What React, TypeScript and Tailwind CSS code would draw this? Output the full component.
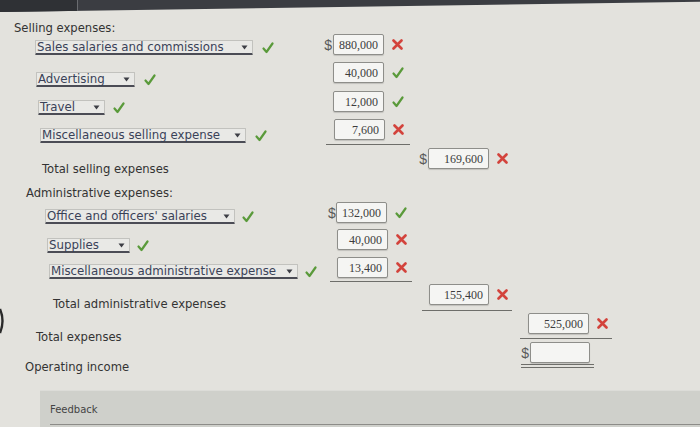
import React from 'react';

const font = "font-['DejaVu_Sans','Verdana',sans-serif]";

const Check = () => (
  <svg width="12" height="12" viewBox="0 0 12 12">
    <path d="M1.5 6.5 L4.5 10 L10.5 1.5" stroke="#5a9a3a" strokeWidth="2.2" fill="none" strokeLinecap="round" strokeLinejoin="round" />
  </svg>
);

const Cross = () => (
  <svg width="11" height="11" viewBox="0 0 11 11">
    <path d="M1.5 1.5 L9.5 9.5 M9.5 1.5 L1.5 9.5" stroke="#d3433c" strokeWidth="2.6" strokeLinecap="round" />
  </svg>
);

function Select({ label, width }: { label: string; width: string }) {
  return (
    <div className={`flex items-center h-[15px] ${width} bg-[#e9e9e6] border border-[#c2c2be] border-b-2 border-b-[#4b4c55] rounded-[1px]`}>
      <span className={`flex-1 pl-[1px] text-[11.8px] leading-[13px] text-[#3a4258] whitespace-nowrap ${font}`}>{label}</span>
      <svg width="7" height="5" viewBox="0 0 7 5" className="mr-[4px]">
        <path d="M0.5 0.5 L6.5 0.5 L3.5 4.5 Z" fill="#3d3e45" />
      </svg>
    </div>
  );
}

function Amount({ dollar, value, box, mark, lead }: { dollar?: boolean; value: string; box: string; mark?: 'ok' | 'bad'; lead: string }) {
  return (
    <div className="flex items-center">
      <span className={`${lead} text-right pr-[1px] text-[14px] leading-[14px] text-[#5a5a5a] font-['Liberation_Sans',sans-serif]`}>{dollar ? '$' : ''}</span>
      <div className={`h-[21px] ${box} bg-[#f5f5f3] border border-[#8e8e8a] rounded-[2px] shadow-[0_1px_1px_rgba(0,0,0,0.15)] flex items-center justify-end pr-[5px] text-[12px] text-[#3c3c3c] font-['Liberation_Serif',serif]`}>
        {value}
      </div>
      <span className="ml-[8px] flex items-center">{mark === 'ok' ? <Check /> : mark === 'bad' ? <Cross /> : null}</span>
    </div>
  );
}

function Label({ text, className }: { text: string; className: string }) {
  return <div className={`text-[11.6px] leading-[16px] text-[#333] whitespace-nowrap ${font} ${className}`}>{text}</div>;
}

export default function App() {
  return (
    <div className="w-[700px] h-[427px] overflow-hidden bg-[#e3e2dd] flex flex-col">
      {/* top chrome */}
      <div className="h-[12px] bg-[#3b3d42] [clip-path:polygon(0_0,100%_0,100%_15%,0_100%)] flex">
        <div className="w-[78px] bg-[#2f3135] border-r border-[#6a6c70]"></div>
      </div>

      {/* heading */}
      <div className="h-[22px] flex">
        <Label text="Selling expenses:" className="mt-[8px] ml-[14px]" />
      </div>

      {/* selling rows */}
      <div className="h-[28px] flex items-start">
        <div className="w-[322px] flex items-center gap-[9px] pl-[35px] mt-[6px]">
          <Select label="Sales salaries and commissions" width="w-[218px]" /><Check />
        </div>
        <div className="w-[96px]">
          <Amount dollar value="880,000" box="w-[51px]" mark="bad" lead="w-[11px]" />
        </div>
      </div>
      <div className="h-[29px] flex items-start">
        <div className="w-[322px] flex items-center gap-[9px] pl-[36px] mt-[10px]">
          <Select label="Advertising" width="w-[99px]" /><Check />
        </div>
        <div className="w-[96px]">
          <Amount value="40,000" box="w-[51px]" mark="ok" lead="w-[11px]" />
        </div>
      </div>
      <div className="h-[28px] flex items-start">
        <div className="w-[322px] flex items-center gap-[8px] pl-[38px] mt-[9px]">
          <Select label="Travel" width="w-[67px]" /><Check />
        </div>
        <div className="w-[96px]">
          <Amount value="12,000" box="w-[51px]" mark="ok" lead="w-[11px]" />
        </div>
      </div>
      <div className="h-[29px] flex items-start">
        <div className="w-[322px] flex items-center gap-[9px] pl-[40px] mt-[9px]">
          <Select label="Miscellaneous selling expense" width="w-[206px]" /><Check />
        </div>
        <div className="w-[96px] flex flex-col">
          <Amount value="7,600" box="w-[51px]" mark="bad" lead="w-[12px]" />
          <div className="ml-[4px] mt-[4px] w-[84px] border-t border-[#6e6e6a]"></div>
        </div>
      </div>

      {/* total selling */}
      <div className="h-[37px] flex items-start">
        <div className="w-[418px]">
          <Label text="Total selling expenses" className="mt-[13px] ml-[42px]" />
        </div>
        <div className="w-[98px]">
          <Amount dollar value="169,600" box="w-[61px]" mark="bad" lead="w-[10px]" />
        </div>
      </div>

      {/* admin heading */}
      <div className="h-[17px] flex">
        <Label text="Administrative expenses:" className="ml-[26px]" />
      </div>

      <div className="h-[27px] flex items-start">
        <div className="w-[328px] flex items-center gap-[7px] pl-[45px] mt-[7px]">
          <Select label="Office and officers' salaries" width="w-[190px]" /><Check />
        </div>
        <div className="w-[90px]">
          <Amount dollar value="132,000" box="w-[51px]" mark="ok" lead="w-[8px]" />
        </div>
      </div>
      <div className="h-[28px] flex items-start">
        <div className="w-[328px] flex items-center gap-[7px] pl-[47px] mt-[9px]">
          <Select label="Supplies" width="w-[83px]" /><Check />
        </div>
        <div className="w-[90px]">
          <Amount value="40,000" box="w-[51px]" mark="bad" lead="w-[9px]" />
        </div>
      </div>
      <div className="h-[27px] flex items-start">
        <div className="w-[328px] flex items-center gap-[7px] pl-[49px] mt-[7px]">
          <Select label="Miscellaneous administrative expense" width="w-[249px]" /><Check />
        </div>
        <div className="w-[90px] flex flex-col">
          <Amount value="13,400" box="w-[51px]" mark="bad" lead="w-[9px]" />
          <div className="ml-[2px] mt-[3px] w-[82px] border-t border-[#6e6e6a]"></div>
        </div>
      </div>

      {/* total admin */}
      <div className="h-[29px] flex items-start">
        <div className="w-[418px]">
          <Label text="Total administrative expenses" className="mt-[12px] ml-[53px]" />
        </div>
        <div className="w-[98px] flex flex-col">
          <Amount value="155,400" box="w-[60px]" mark="bad" lead="w-[11px]" />
          <div className="ml-[4px] mt-[5px] w-[90px] border-t border-[#6e6e6a]"></div>
        </div>
      </div>

      {/* total expenses */}
      <div className="h-[29px] flex items-start">
        <div className="w-[516px] flex items-start">
          <svg width="6" height="26" viewBox="0 0 6 26" className="-mt-[5px]">
            <path d="M0 1 Q5 13 0 25" stroke="#2a2a2a" strokeWidth="2.4" fill="none" />
          </svg>
          <Label text="Total expenses" className="mt-[16px] ml-[30px]" />
        </div>
        <div className="w-[100px] flex flex-col">
          <Amount value="525,000" box="w-[61px]" mark="bad" lead="w-[12px]" />
          <div className="ml-[4px] mt-[4px] w-[92px] border-t border-[#6e6e6a]"></div>
        </div>
      </div>

      {/* operating income */}
      <div className="h-[48px] flex items-start">
        <div className="w-[516px]">
          <Label text="Operating income" className="mt-[17px] ml-[25px]" />
        </div>
        <div className="w-[100px] flex flex-col">
          <Amount dollar value="" box="w-[60px]" lead="w-[14px]" />
          <div className="ml-[5px] mt-[1px] w-[73px] h-[4px] border-y border-[#6e6e6a]"></div>
        </div>
      </div>

      {/* feedback */}
      <div className="flex-1 ml-[40px] bg-[#cfd0cb] border-t border-[#dcdcd8] flex flex-col">
        <div className={`mt-[11px] ml-[10px] text-[10px] text-[#444] ${font}`}>Feedback</div>
        <div className="mt-[7px] ml-[10px] border-t border-[#8c8c88]"></div>
      </div>
    </div>
  );
}
